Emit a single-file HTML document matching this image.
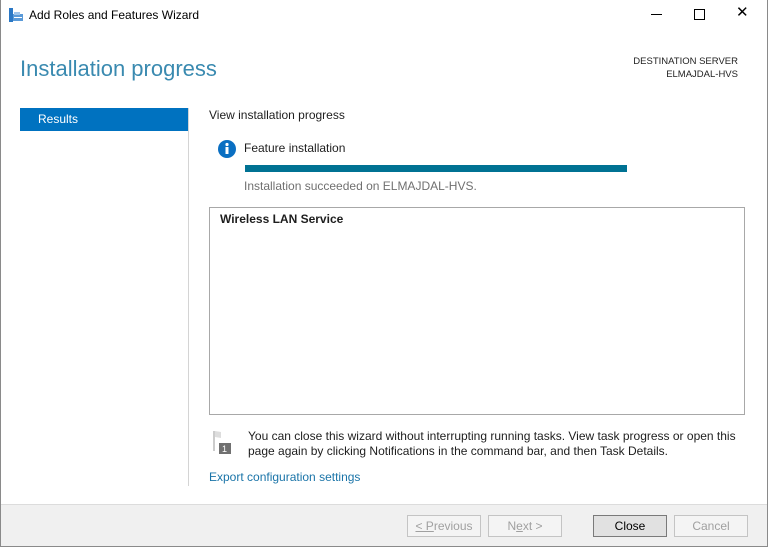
<!DOCTYPE html>
<html><head><meta charset="utf-8"><style>
*{margin:0;padding:0;box-sizing:border-box}
body{width:768px;height:547px;overflow:hidden;background:#fff;font-family:"Liberation Sans",sans-serif;font-size:12px;color:#1e1e1e;position:relative}
.frame{position:absolute;left:0;top:0;width:768px;height:547px;border:1px solid #8a8a8a;border-top:none;pointer-events:none}
.abs{position:absolute;white-space:nowrap}
.btn{position:absolute;top:515px;height:22px;width:74px;border:1px solid #c4c4c4;background:#f4f4f4;color:#a0a0a0;text-align:center;line-height:20px;font-size:12px}
</style></head><body>
<svg class="abs" style="left:8px;top:7px" width="16" height="16" viewBox="0 0 16 16"><rect x="1" y="1" width="4" height="14" fill="#2b78c5"/><rect x="5" y="7" width="10" height="7" fill="#5a9ad8"/><rect x="6" y="5" width="6" height="3" fill="#9ec4ea"/><rect x="6" y="10" width="8" height="1" fill="#fff"/></svg>
<div class="abs" style="left:29px;top:8px;font-size:12px;color:#000">Add Roles and Features Wizard</div>
<div class="abs" style="left:651px;top:14px;width:11px;height:1px;background:#000"></div>
<div class="abs" style="left:694px;top:9px;width:11px;height:11px;border:1px solid #000"></div>
<div class="abs" style="left:736px;top:3px;font-size:15px;color:#000">✕</div>
<div class="abs" style="left:20px;top:56px;font-size:22px;color:#3a8ab0;font-weight:300">Installation progress</div>
<div class="abs" style="right:30px;top:55px;font-size:9.5px;text-align:right;line-height:13px;color:#222">DESTINATION SERVER<br>ELMAJDAL-HVS</div>
<div class="abs" style="left:20px;top:108px;width:168px;height:23px;background:#0072c0;color:#fff;padding-left:18px;line-height:23px">Results</div>
<div class="abs" style="left:188px;top:108px;width:1px;height:378px;background:#d4d4d4"></div>
<div class="abs" style="left:209px;top:108px">View installation progress</div>
<svg class="abs" style="left:217px;top:139px" width="20" height="20"><circle cx="10" cy="10" r="9" fill="#0a6fc2"/><rect x="8.5" y="8" width="3" height="7" fill="#fff"/><circle cx="10" cy="5.5" r="1.6" fill="#fff"/></svg>
<div class="abs" style="left:244px;top:141px">Feature installation</div>
<div class="abs" style="left:245px;top:165px;width:382px;height:7px;background:#007293"></div>
<div class="abs" style="left:244px;top:179px;color:#707070">Installation succeeded on ELMAJDAL-HVS.</div>
<div class="abs" style="left:209px;top:207px;width:536px;height:208px;border:1px solid #a8a8a8"></div>
<div class="abs" style="left:220px;top:212px;font-weight:bold">Wireless LAN Service</div>
<svg class="abs" style="left:211px;top:430px" width="24" height="26"><rect x="2" y="1" width="2" height="20" fill="#ccc"/><polygon points="4,1 10,2 10,8 4,7" fill="#ddd"/><rect x="8" y="13" width="12" height="11" fill="#707070"/><text x="11" y="22" font-size="9" fill="#fff" font-family="Liberation Sans">1</text></svg>
<div class="abs" style="left:248px;top:429px;line-height:15px">You can close this wizard without interrupting running tasks. View task progress or open this<br>page again by clicking Notifications in the command bar, and then Task Details.</div>
<div class="abs" style="left:209px;top:470px;color:#1a74a8">Export configuration settings</div>
<div class="abs" style="left:0;top:504px;width:768px;height:43px;background:#f0f0f0;border-top:1px solid #dcdcdc"></div>
<div class="btn" style="left:407px"><u>&lt; P</u>revious</div>
<div class="btn" style="left:488px">N<u>e</u>xt &gt;</div>
<div class="btn" style="left:593px;background:#e1e1e1;border-color:#7a7a7a;color:#000">Close</div>
<div class="btn" style="left:674px">Cancel</div>
<div class="frame"></div>
</body></html>
